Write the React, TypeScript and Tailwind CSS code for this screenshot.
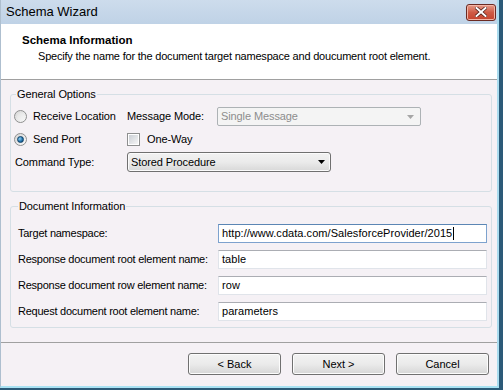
import React from "react";

const font = { fontFamily: '"Liberation Sans", Arial, sans-serif' };

function Radio({ checked }: { checked?: boolean }) {
  return (
    <span className="relative flex h-[13px] w-[13px] shrink-0 items-center justify-center rounded-full border border-[#8e8f8f] bg-gradient-to-br from-[#d6d6d6] to-[#fbfbfb]">
      {checked ? (
        <span className="h-[7px] w-[7px] rounded-full border border-[#0f3f66] bg-[radial-gradient(circle_at_35%_35%,#8fd0f5,#1f6fa8_60%,#0d4470)]" />
      ) : (
        <span className="h-[7px] w-[7px] rounded-full bg-gradient-to-br from-[#e2e2e2] to-[#f6f6f6]" />
      )}
    </span>
  );
}

function Arrow({ color }: { color: string }) {
  return (
    <svg width="7" height="4" viewBox="0 0 7 4">
      <path d="M0 0 H7 L3.5 4 Z" fill={color} />
    </svg>
  );
}

function TextBox({ value, focused }: { value: string; focused?: boolean }) {
  return (
    <div
      className={
        "flex h-[19px] w-[269px] items-center bg-white pl-[3px] " +
        (focused
          ? "border border-[#7da2ce] border-t-[#5b86b4]"
          : "border border-[#e0e4ea] border-t-[#abadb3]")
      }
    >
      <span className="text-[11px] leading-none tracking-[0.05px] text-black">{value}</span>
      {focused && <span className="ml-[1px] h-[13px] w-[1px] bg-black" />}
    </div>
  );
}

function Btn({ label }: { label: string }) {
  return (
    <div className="flex h-[22px] w-[93px] items-center justify-center rounded-[3px] border border-[#707070] bg-gradient-to-b from-[#f2f2f2] via-[#ebebeb] to-[#d6d6d6] shadow-[inset_0_0_0_1px_#fcfcfc]">
      <span className="text-[11px] text-black">{label}</span>
    </div>
  );
}

const lbl = "text-[11px] tracking-[-0.1px] text-black";
const lbl2 = "text-[11px] tracking-[-0.25px] text-black";

export default function App() {
  return (
    <div className="h-[390px] w-[503px] overflow-hidden bg-[#2c5a78]" style={font}>
      <div className="flex h-[388px] w-[499px] flex-col border-b-[2px] border-l border-r-[2px] border-b-[#a9e2f3] border-l-[#aebfcf] border-r-[#aadcef] bg-[#f5f1f5]">
        {/* Title bar */}
        <div className="flex h-[24px] shrink-0 items-center justify-between bg-gradient-to-b from-[#cddcec] to-[#bfd2e6] pl-[5px] pr-[1px]">
          <span className="text-[13px] text-black">Schema Wizard</span>
          <div className="flex h-[17px] w-[30px] items-center justify-center rounded-[3px] border border-[#6b2a22] bg-gradient-to-b from-[#e59a88] via-[#cf5b45] to-[#c4442e] shadow-[inset_0_0_0_1px_#f2b5a6]">
            <svg width="12" height="10" viewBox="0 0 12 10">
              <path d="M1.5 1 L10.5 9 M10.5 1 L1.5 9" stroke="#4a1a14" strokeWidth="3.4" strokeLinecap="square" />
              <path d="M1.5 1 L10.5 9 M10.5 1 L1.5 9" stroke="#ffffff" strokeWidth="2" strokeLinecap="square" />
            </svg>
          </div>
        </div>

        {/* Header */}
        <div className="flex h-[55px] shrink-0 flex-col bg-white pl-[21px] pt-[9px]">
          <span className="text-[11.5px] font-bold leading-[14px] text-black">Schema Information</span>
          <span className="pl-[16px] pt-[2px] text-[11px] leading-[14px] tracking-[-0.2px] text-black">
            Specify the name for the document target namespace and doucument root element.
          </span>
        </div>
        <div className="h-[1px] shrink-0 bg-[#a0a0a0]" />

        {/* Body */}
        <div className="flex flex-col pl-[9px]">
          {/* General Options */}
          <div className="relative mt-[14px] h-[98px] w-[482px] rounded-[3px] border border-[#d5dfe5] pl-[3px] pt-[12px]">
            <span className={"absolute left-[5px] top-[-8px] bg-[#f5f1f5] px-[1px] leading-[14px] " + lbl}>
              General Options
            </span>
            <div className="flex h-[19px] items-center">
              <div className="flex w-[113px] items-center gap-[6px]">
                <Radio />
                <span className={lbl}>Receive Location</span>
              </div>
              <span className={"w-[90px] " + lbl}>Message Mode:</span>
              <div className="flex h-[19px] w-[204px] items-center justify-between rounded-[2px] border border-[#adb2b5] bg-[#f4f4f4] pl-[3px] pr-[6px]">
                <span className="text-[11px] tracking-[-0.1px] text-[#8d8d8d]">Single Message</span>
                <Arrow color="#a6a6a6" />
              </div>
            </div>
            <div className="mt-[4px] flex h-[18px] items-center">
              <div className="flex w-[113px] items-center gap-[6px]">
                <Radio checked />
                <span className={lbl}>Send Port</span>
              </div>
              <div className="flex items-center gap-[7px]">
                <span className="flex h-[13px] w-[13px] items-center justify-center border border-[#8e8f8f] bg-white">
                  <span className="h-[9px] w-[9px] bg-gradient-to-br from-[#cbcfd5] to-[#f6f6f6]" />
                </span>
                <span className={lbl}>One-Way</span>
              </div>
            </div>
            <div className="mt-[4px] flex h-[20px] items-center">
              <span className={"w-[113px] pl-[1px] " + lbl}>Command Type:</span>
              <div className="flex h-[20px] w-[204px] items-center justify-between rounded-[3px] border border-[#707070] bg-gradient-to-b from-[#f2f2f2] via-[#ebebeb] to-[#d8d8d8] pl-[3px] pr-[5px] shadow-[inset_0_0_0_1px_#fbfbfb]">
                <span className={lbl}>Stored Procedure</span>
                <Arrow color="#000000" />
              </div>
            </div>
          </div>

          {/* Document Information */}
          <div className="relative mt-[14px] h-[122px] w-[482px] rounded-[3px] border border-[#d5dfe5] pl-[7px] pt-[17px]">
            <span className={"absolute left-[7px] top-[-8px] bg-[#f5f1f5] px-[1px] leading-[14px] " + lbl}>
              Document Information
            </span>
            <div className="flex flex-col gap-[7px]">
              {[
                ["Target namespace:", "http://www.cdata.com/SalesforceProvider/2015", true],
                ["Response document root element name:", "table", false],
                ["Response document row element name:", "row", false],
                ["Request document root element name:", "parameters", false],
              ].map(([label, value, focused]) => (
                <div key={label as string} className="flex h-[19px] items-center">
                  <span className={"w-[200px] " + lbl2}>{label as string}</span>
                  <TextBox value={value as string} focused={focused as boolean} />
                </div>
              ))}
            </div>
          </div>
        </div>

        <div className="mt-[14px] h-[1px] shrink-0 bg-[#a0a0a0]" />

        {/* Buttons */}
        <div className="flex justify-end gap-[11px] pr-[8px] pt-[10px]">
          <Btn label="< Back" />
          <Btn label="Next >" />
          <Btn label="Cancel" />
        </div>
      </div>
    </div>
  );
}
